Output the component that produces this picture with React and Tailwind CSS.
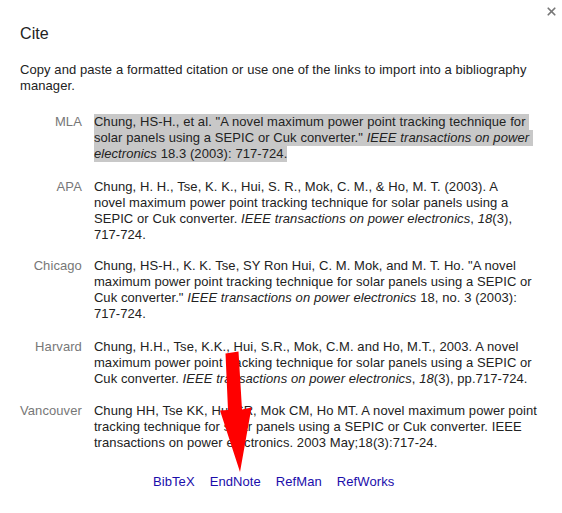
import { X } from "lucide-react";

const citations = [
  {
    label: "MLA",
    marked: true,
    gap: "",
    lines: [
      <>Chung, HS-H., et al. "A novel maximum power point tracking technique for </>,
      <>solar panels using a SEPIC or Cuk converter." <i>IEEE transactions on power </i></>,
      <><i>electronics</i> 18.3 (2003): 717-724.</>,
    ],
  },
  {
    label: "APA",
    gap: "mt-[17px]",
    lines: [
      <>Chung, H. H., Tse, K. K., Hui, S. R., Mok, C. M., &amp; Ho, M. T. (2003). A</>,
      <>novel maximum power point tracking technique for solar panels using a</>,
      <>SEPIC or Cuk converter. <i>IEEE transactions on power electronics</i>, <i>18</i>(3),</>,
      <>717-724.</>,
    ],
  },
  {
    label: "Chicago",
    gap: "mt-[15px]",
    lines: [
      <>Chung, HS-H., K. K. Tse, SY Ron Hui, C. M. Mok, and M. T. Ho. "A novel</>,
      <>maximum power point tracking technique for solar panels using a SEPIC or</>,
      <>Cuk converter." <i>IEEE transactions on power electronics</i> 18, no. 3 (2003):</>,
      <>717-724.</>,
    ],
  },
  {
    label: "Harvard",
    gap: "mt-[17px]",
    lines: [
      <>Chung, H.H., Tse, K.K., Hui, S.R., Mok, C.M. and Ho, M.T., 2003. A novel</>,
      <>maximum power point tracking technique for solar panels using a SEPIC or</>,
      <>Cuk converter. <i>IEEE transactions on power electronics</i>, <i>18</i>(3), pp.717-724.</>,
    ],
  },
  {
    label: "Vancouver",
    gap: "mt-4",
    lines: [
      <>Chung HH, Tse KK, Hui SR, Mok CM, Ho MT. A novel maximum power point</>,
      <>tracking technique for solar panels using a SEPIC or Cuk converter. IEEE</>,
      <>transactions on power electronics. 2003 May;18(3):717-24.</>,
    ],
  },
];

const links = ["BibTeX", "EndNote", "RefMan", "RefWorks"];

const App = () => {
  return (
    <div className="relative w-[562px] h-[513px] bg-white px-5 text-[#222] font-['Liberation_Sans',Arial,sans-serif] tracking-[0.08px] overflow-hidden">
      <button className="absolute top-[4px] right-[3px] w-[15px] h-[15px] flex items-center justify-center text-[#777]">
        <X className="w-[13px] h-[13px]" strokeWidth={3.2} />
      </button>

      <h2 className="pt-6 text-base leading-5 font-normal">Cite</h2>

      <p className="mt-[18px] text-[13px] leading-4">
        Copy and paste a formatted citation or use one of the links to import into a bibliography manager.
      </p>

      <div className="mt-5 grid grid-cols-[auto_1fr] gap-x-3 text-[13px] leading-4">
        {citations.map((c) => (
          <div key={c.label} className="contents">
            <div className={`${c.gap} text-right text-[#777]`}>{c.label}</div>
            <div className={c.gap}>
              {c.lines.map((line, i) => (
                <div
                  key={i}
                  className={
                    c.marked
                      ? "w-fit whitespace-pre bg-[#c8c8c8]"
                      : "w-fit whitespace-nowrap"
                  }
                >
                  {line}
                </div>
              ))}
            </div>
          </div>
        ))}
      </div>

      <div className="mt-[23px] ml-[133px] flex gap-[15px] text-[13px] leading-4">
        {links.map((l) => (
          <a key={l} href="#" className="text-[#1a0dab]">
            {l}
          </a>
        ))}
      </div>

      <svg className="absolute left-0 top-0 pointer-events-none" width="562" height="513" viewBox="0 0 562 513">
        <polygon
          points="225.5,353.5 238.5,351.5 242,409.5 251.5,407.5 240,472 220,410.5 228,410"
          fill="#ff0000"
        />
      </svg>
    </div>
  );
};

export default App;
